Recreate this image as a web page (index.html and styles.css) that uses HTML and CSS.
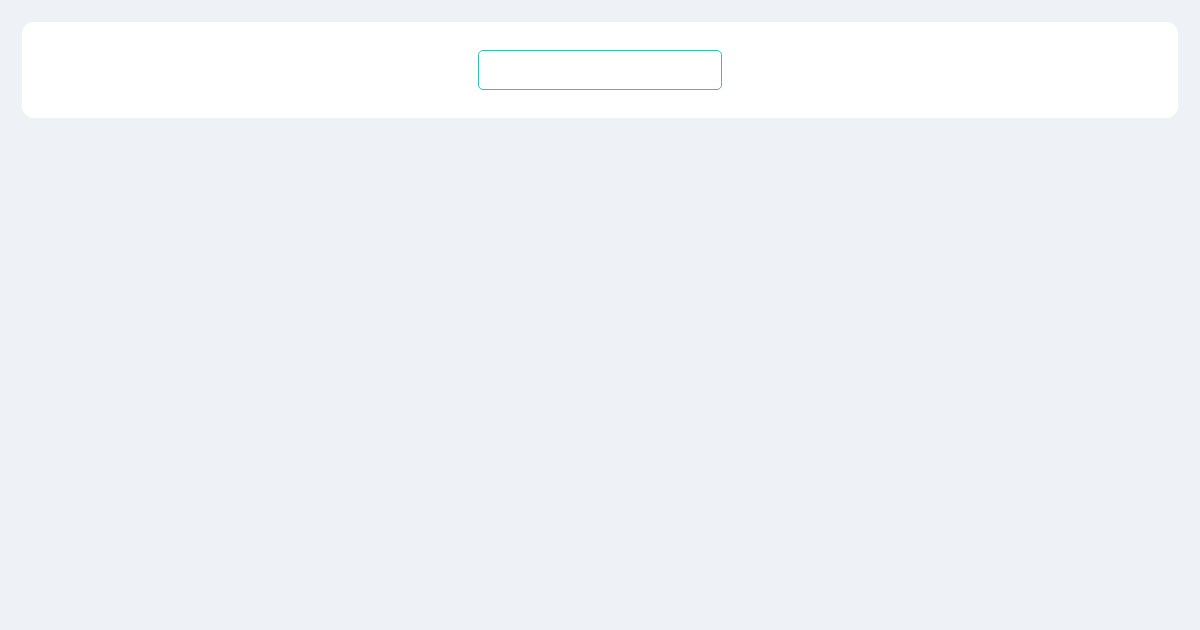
FILE: index.html
```html
<!DOCTYPE html>
<html lang="en">
<head>
<meta charset="utf-8">
<title>Search</title>
<link rel="stylesheet" href="styles.css">
</head>
<body>
<main class="page">
  <section class="card">
    <input class="field" type="text" aria-label="Search">
  </section>
</main>
</body>
</html>
```

FILE: styles.css
```css
html, body {
  margin: 0;
  padding: 0;
  background: #eef1f6;
  font-family: "Liberation Sans", Arial, sans-serif;
}
.page {
  padding: 22px;
  min-height: 630px;
  box-sizing: border-box;
}
.card {
  background: #ffffff;
  border-radius: 12px;
  padding: 28px 0;
  display: flex;
  justify-content: center;
}
.field {
  width: 244px;
  height: 40px;
  box-sizing: border-box;
  border: 1px solid #34c3b2;
  border-radius: 5px;
  background: #ffffff;
  outline: none;
  padding: 0 12px;
  font: inherit;
  font-size: 14px;
}
```
